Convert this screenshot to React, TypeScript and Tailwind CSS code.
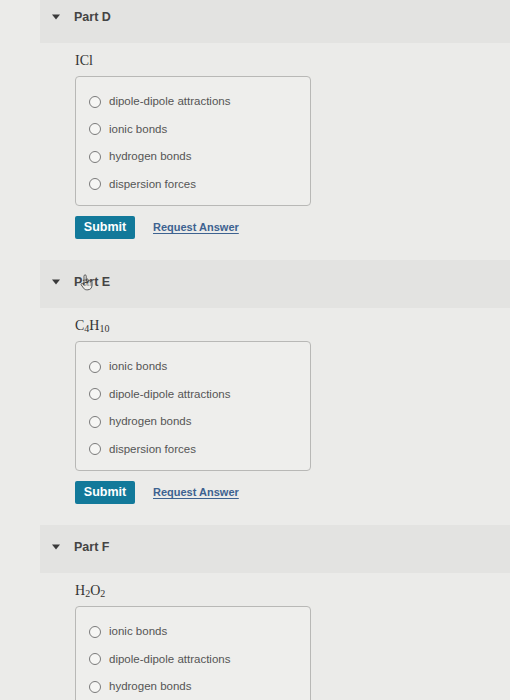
import React from 'react'

interface PartProps {
  label: string;
  formula: React.ReactNode;
  options: string[];
  first?: boolean;
  cursor?: boolean;
}

const HandCursor: React.FC = () => (
  <svg className="absolute left-[5px] top-[-1px]" width="16" height="20" viewBox="0 0 16 18" fill="none">
    <path
      d="M5 10V3.2c0-.9.5-1.4 1.1-1.4s1.1.5 1.1 1.4V8M7.2 8V7c0-.7.5-1.1 1-1.1s1 .4 1 1.1v1.3M9.2 8.3c0-.6.5-1 1-1s1 .4 1 1v.6M11.2 8.9c0-.5.4-.9.9-.9s.9.4.9 1.1v3.2c0 2.6-1.7 4.5-4.2 4.5H7.6c-1.3 0-2.2-.6-3-1.6L2.3 12c-.4-.5-.3-1.1.2-1.4.5-.3 1-.2 1.4.3L5 12"
      stroke="#4a4a4a"
      strokeWidth="0.9"
      strokeLinecap="round"
      strokeLinejoin="round"
      fill="#f4f4f2"
      fillOpacity="0.6"
    />
  </svg>
)

const Part: React.FC<PartProps> = ({ label, formula, options, first, cursor }) => {
  return (
    <div className={first ? '-mt-[5px]' : ''}>
      <div className="ml-[40px] h-[48px] bg-[#e3e3e1] flex items-center pb-[4px]">
        <svg className="ml-[12px]" width="8" height="6" viewBox="0 0 8 6">
          <path d="M0 0.5h8L4 5.5z" fill="#3a3a3a" />
        </svg>
        <span className="relative ml-[14px] text-[12.5px] font-semibold text-[#444]">
          {label}
          {cursor && <HandCursor />}
        </span>
      </div>
      <div className="ml-[75px]">
        <div className="mt-[7px] h-[20px] flex items-center font-['Liberation_Serif',serif] text-[14px] text-[#333]">
          {formula}
        </div>
        <div className="mt-[6px] w-[236px] rounded-[4px] border border-[#b8b8b6] bg-[#eeeeec] pt-[11px] pb-[7px] pl-[13px]">
          {options.map((opt) => (
            <label key={opt} className="h-[27.5px] flex items-center gap-[8px]">
              <span className="w-[12px] h-[12px] rounded-full border-[1.5px] border-[#7a7a7a] bg-[#f6f6f4]" />
              <span className="text-[11.5px] text-[#555]">{opt}</span>
            </label>
          ))}
        </div>
        <div className="mt-[10px] flex items-center gap-[18px]">
          <button className="w-[60px] h-[23px] rounded-[2px] bg-[#12799a] text-white text-[12.5px] font-bold">
            Submit
          </button>
          <a href="#" className="text-[11px] font-bold text-[#3d6290] underline underline-offset-2">
            Request Answer
          </a>
        </div>
        <div className="h-[21px]" />
      </div>
    </div>
  )
}

const App: React.FC = () => {
  return (
    <div className="w-[510px] h-[700px] overflow-hidden bg-[#ebebe9] font-['Liberation_Sans',Arial,sans-serif]">
      <Part
        first
        label="Part D"
        formula={<span>ICl</span>}
        options={['dipole-dipole attractions', 'ionic bonds', 'hydrogen bonds', 'dispersion forces']}
      />
      <Part
        cursor
        label="Part E"
        formula={
          <span>
            C<sub className="text-[10px]">4</sub>H<sub className="text-[10px]">10</sub>
          </span>
        }
        options={['ionic bonds', 'dipole-dipole attractions', 'hydrogen bonds', 'dispersion forces']}
      />
      <Part
        label="Part F"
        formula={
          <span>
            H<sub className="text-[10px]">2</sub>O<sub className="text-[10px]">2</sub>
          </span>
        }
        options={['ionic bonds', 'dipole-dipole attractions', 'hydrogen bonds', 'dispersion forces']}
      />
    </div>
  )
}

export default App
